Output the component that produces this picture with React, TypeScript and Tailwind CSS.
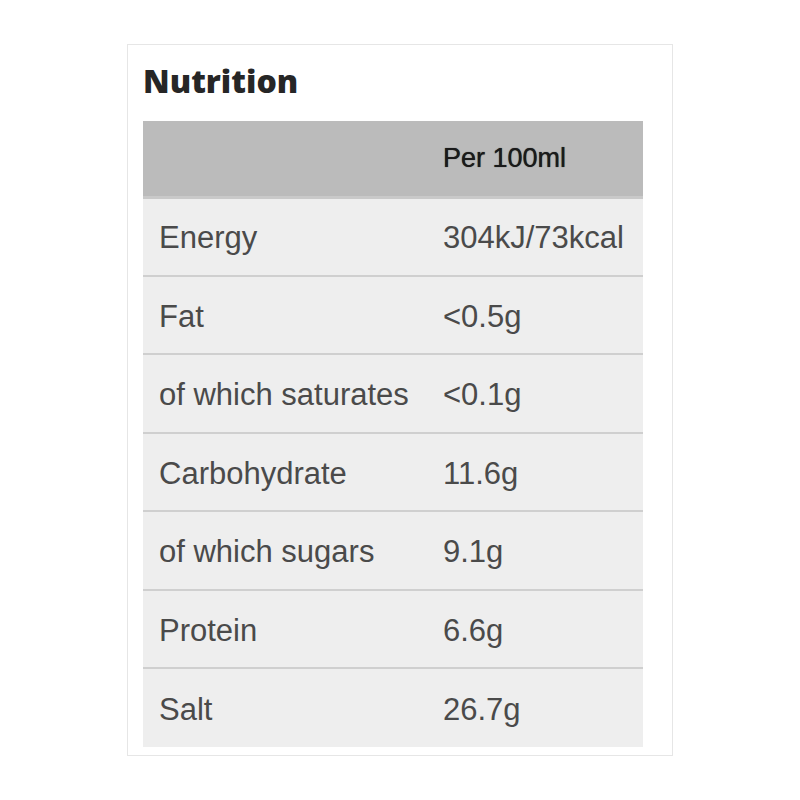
import React from 'react';

const rows: [string, string][] = [
  ['Energy', '304kJ/73kcal'],
  ['Fat', '<0.5g'],
  ['of which saturates', '<0.1g'],
  ['Carbohydrate', '11.6g'],
  ['of which sugars', '9.1g'],
  ['Protein', '6.6g'],
  ['Salt', '26.7g'],
];

export default function App() {
  return (
    <div className="w-[800px] h-[800px] bg-white pt-[44px] pl-[127px]">
      <div className="w-[546px] border border-[#e6e6e6] bg-white pl-[15px] pt-[15px] pb-[8px]">
        <h2 className="font-['Open_Sans',sans-serif] font-extrabold text-[32px] leading-[42px] text-[#262626]">
          Nutrition
        </h2>
        <table className="mt-[19px] w-[500px] border-collapse font-['Liberation_Sans',Arial,sans-serif]">
          <thead>
            <tr className="bg-[#bbbbbb] h-[76px] border-b-[3px] border-[#c9c9c9]">
              <th className="w-[283px]" />
              <th className="pl-[17px] text-left text-[27px] font-normal text-[#1a1a1a] [text-shadow:0_0_0.8px_#1a1a1a]">
                Per 100ml
              </th>
            </tr>
          </thead>
          <tbody>
            {rows.map(([label, value], i) => (
              <tr
                key={label}
                className={`bg-[#eeeeee] h-[78.5px] ${i < rows.length - 1 ? 'border-b-2 border-[#cfcfcf]' : ''}`}
              >
                <td className="pl-[16px] pt-[4px] text-[31px] text-[#4a4a4a] whitespace-nowrap">{label}</td>
                <td className="pl-[17px] pt-[4px] text-[31px] text-[#4a4a4a] whitespace-nowrap">{value}</td>
              </tr>
            ))}
          </tbody>
        </table>
      </div>
    </div>
  );
}
